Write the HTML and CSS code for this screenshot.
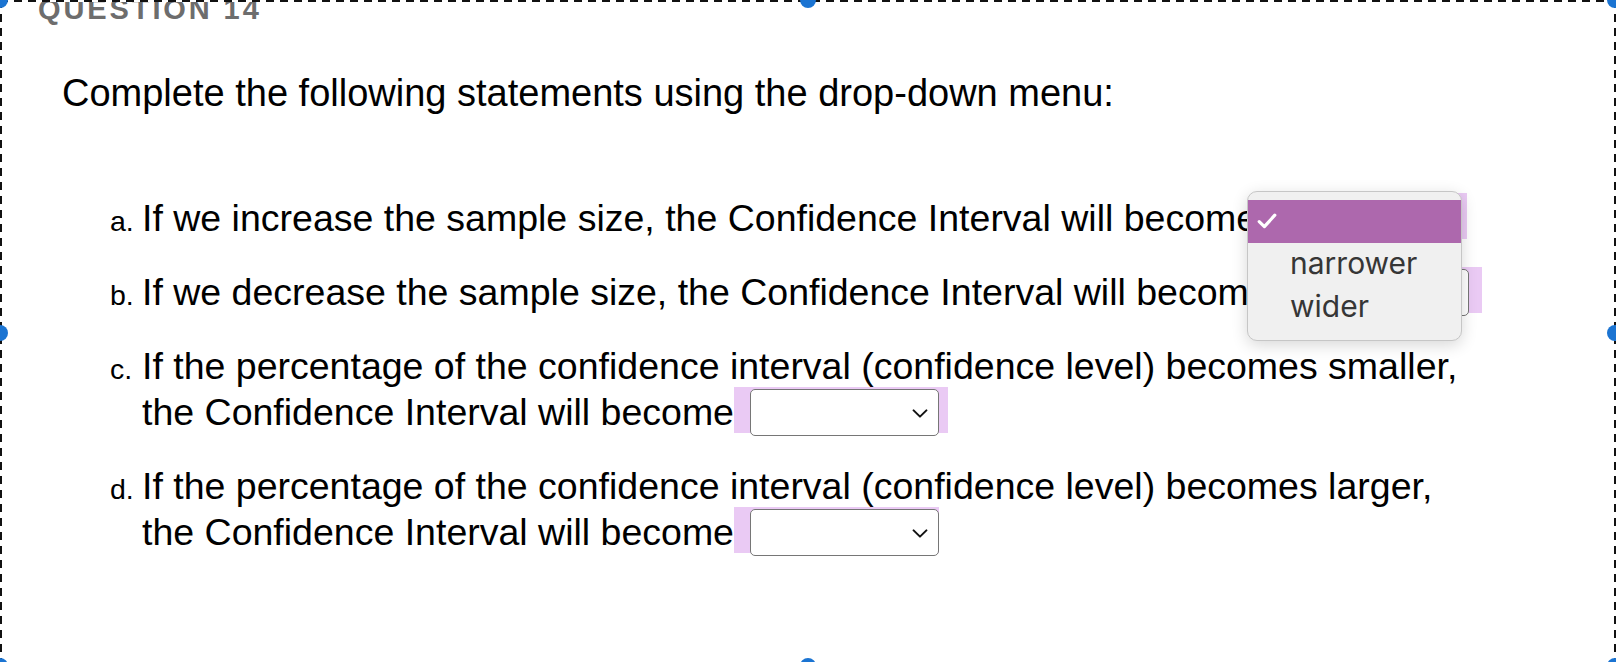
FILE: index.html
```html
<!DOCTYPE html>
<html lang="en">
<head>
<meta charset="utf-8">
<title>Question 14</title>
<link rel="stylesheet" href="styles.css">
</head>
<body>
<div class="frame">
  <div class="sheet">
    <h2 class="q-label">QUESTION 14</h2>
    <p class="prompt">Complete the following statements using the drop-down menu:</p>
    <ol class="items">
      <li class="item">
        <span class="tag">a.</span>
        <span class="stmt">If we increase the sample size, the Confidence Interval will become<span class="blank blank--trail"><span class="pick-wrap"><select class="pick" aria-label="Answer a"><option></option><option>narrower</option><option>wider</option></select><svg class="chev" viewBox="0 0 16 9" width="16" height="9"><path d="M1.6 1.4 L8 7.6 L14.4 1.4"/></svg></span></span></span>
      </li>
      <li class="item">
        <span class="tag">b.</span>
        <span class="stmt">If we decrease the sample size, the Confidence Interval will become<span class="blank blank--wide"><span class="pick-wrap"><select class="pick" aria-label="Answer b"><option></option><option>narrower</option><option>wider</option></select><svg class="chev" viewBox="0 0 16 9" width="16" height="9"><path d="M1.6 1.4 L8 7.6 L14.4 1.4"/></svg></span></span></span>
      </li>
      <li class="item">
        <span class="tag">c.</span>
        <span class="stmt">If the percentage of the confidence interval (confidence level) becomes smaller,<br>the Confidence Interval will become<span class="blank blank--late"><span class="pick-wrap"><select class="pick" aria-label="Answer c"><option></option><option>narrower</option><option>wider</option></select><svg class="chev" viewBox="0 0 16 9" width="16" height="9"><path d="M1.6 1.4 L8 7.6 L14.4 1.4"/></svg></span></span></span>
      </li>
      <li class="item">
        <span class="tag">d.</span>
        <span class="stmt">If the percentage of the confidence interval (confidence level) becomes larger,<br>the Confidence Interval will become<span class="blank blank--late blank--snug"><span class="pick-wrap"><select class="pick" aria-label="Answer d"><option></option><option>narrower</option><option>wider</option></select><svg class="chev" viewBox="0 0 16 9" width="16" height="9"><path d="M1.6 1.4 L8 7.6 L14.4 1.4"/></svg></span></span></span>
      </li>
    </ol>
  </div>

  <!-- open option list of the first drop-down -->
  <div class="menu" role="listbox">
    <div class="opt opt--current" role="option" aria-selected="true">
      <svg class="check" viewBox="0 0 20 16" width="20" height="16"><path d="M2.2 8.6 L7.4 13.6 L17.8 2.2"/></svg>
    </div>
    <div class="opt" role="option">narrower</div>
    <div class="opt" role="option">wider</div>
  </div>

  <!-- resize handles -->
  <span class="handle handle--tl"></span>
  <span class="handle handle--tc"></span>
  <span class="handle handle--tr"></span>
  <span class="handle handle--ml"></span>
  <span class="handle handle--mr"></span>
  <span class="handle handle--bl"></span>
  <span class="handle handle--bc"></span>
  <span class="handle handle--br"></span>
</div>
</body>
</html>
```

FILE: styles.css
```css
html,
body {
  margin: 0;
  height: 100%;
  overflow: hidden;
  background: #fff;
}

body {
  font-family: "Liberation Sans", Arial, Helvetica, sans-serif;
  color: #000;
}

.frame {
  position: relative;
  width: 1616px;
  height: 666px;
}

/* dashed selection outline drawn above the question */
.frame::after {
  content: "";
  position: absolute;
  inset: 0;
  pointer-events: none;
  background:
    repeating-linear-gradient(90deg, #111 0 8px, transparent 8px 14px) top left / 100% 2px no-repeat,
    repeating-linear-gradient(90deg, #111 0 8px, transparent 8px 14px) bottom left / 100% 2px no-repeat,
    repeating-linear-gradient(180deg, #111 0 8px, transparent 8px 14px) top left / 2px 100% no-repeat,
    repeating-linear-gradient(180deg, #111 0 8px, transparent 8px 14px) top right / 2px 100% no-repeat;
}

.sheet {
  height: 100%;
  box-sizing: border-box;
  border: 2px solid transparent;
  overflow: hidden;
}

.q-label {
  margin: -7px 0 0 36px;
  font-size: 29px;
  line-height: 29px;
  font-weight: bold;
  letter-spacing: 2.9px;
  color: #6d6d6d;
}

.prompt {
  margin: 46px 0 0 60px;
  font-size: 38px;
  line-height: 46px;
}

.items {
  list-style: none;
  margin: 79px 0 0;
  padding: 0 0 0 108px;
  display: flex;
  flex-direction: column;
  gap: 28px;
}

.item {
  display: grid;
  grid-template-columns: 32px 1420px;
  align-items: baseline;
  font-size: 37.5px;
  line-height: 46px;
}

.tag {
  font-size: 28.5px;
  line-height: 1;
}

/* answer blank: tinted span holding the drop-down */
.blank {
  background: #eacaf4;
  padding: 4px 0 0 10px;
}

.blank--trail {
  padding-right: 11px;
}

.blank--wide {
  padding-right: 13px;
}

.blank--late {
  padding-left: 16px;
  padding-right: 9px;
}

.blank--snug {
  padding-right: 0;
}

.pick-wrap {
  position: relative;
  display: inline-block;
  vertical-align: text-bottom;
  margin-bottom: -3px;
}

.pick {
  display: block;
  appearance: none;
  -webkit-appearance: none;
  width: 189px;
  height: 47px;
  box-sizing: border-box;
  margin: 0;
  border: 1.5px solid #767676;
  border-radius: 5px;
  background: #fff;
  font: inherit;
}

.chev {
  position: absolute;
  right: 11px;
  top: 50%;
  margin-top: -4px;
  fill: none;
  stroke: #111;
  stroke-width: 2;
  stroke-linecap: round;
  stroke-linejoin: round;
}

/* option list popup */
.menu {
  position: absolute;
  left: 1247px;
  top: 191px;
  width: 215px;
  box-sizing: border-box;
  padding: 8px 0 11px;
  background: #f0f0f0;
  border: 1px solid #c6c6c6;
  border-radius: 10px;
  box-shadow: 0 4px 16px rgba(0, 0, 0, 0.16);
  font-family: Inter, "Noto Sans", sans-serif;
  font-size: 30px;
  color: #363636;
}

.opt {
  position: relative;
  height: 43px;
  line-height: 41px;
  padding-left: 42px;
}

.opt--current {
  background: #ad68ad;
}

.check {
  position: absolute;
  left: 9px;
  top: 13px;
  fill: none;
  stroke: #fff;
  stroke-width: 3.2;
  stroke-linecap: round;
  stroke-linejoin: round;
}

.handle {
  position: absolute;
  width: 16px;
  height: 16px;
  border-radius: 50%;
  background: #1b74d2;
  transform: translate(-50%, -50%);
  z-index: 2;
}

.handle--tl { left: 0; top: 0; }
.handle--tc { left: 808px; top: 0; }
.handle--tr { left: 1615px; top: 0; }
.handle--ml { left: 0; top: 333px; }
.handle--mr { left: 1615px; top: 333px; }
.handle--bl { left: 0; top: 666px; }
.handle--bc { left: 808px; top: 666px; }
.handle--br { left: 1615px; top: 666px; }
```
